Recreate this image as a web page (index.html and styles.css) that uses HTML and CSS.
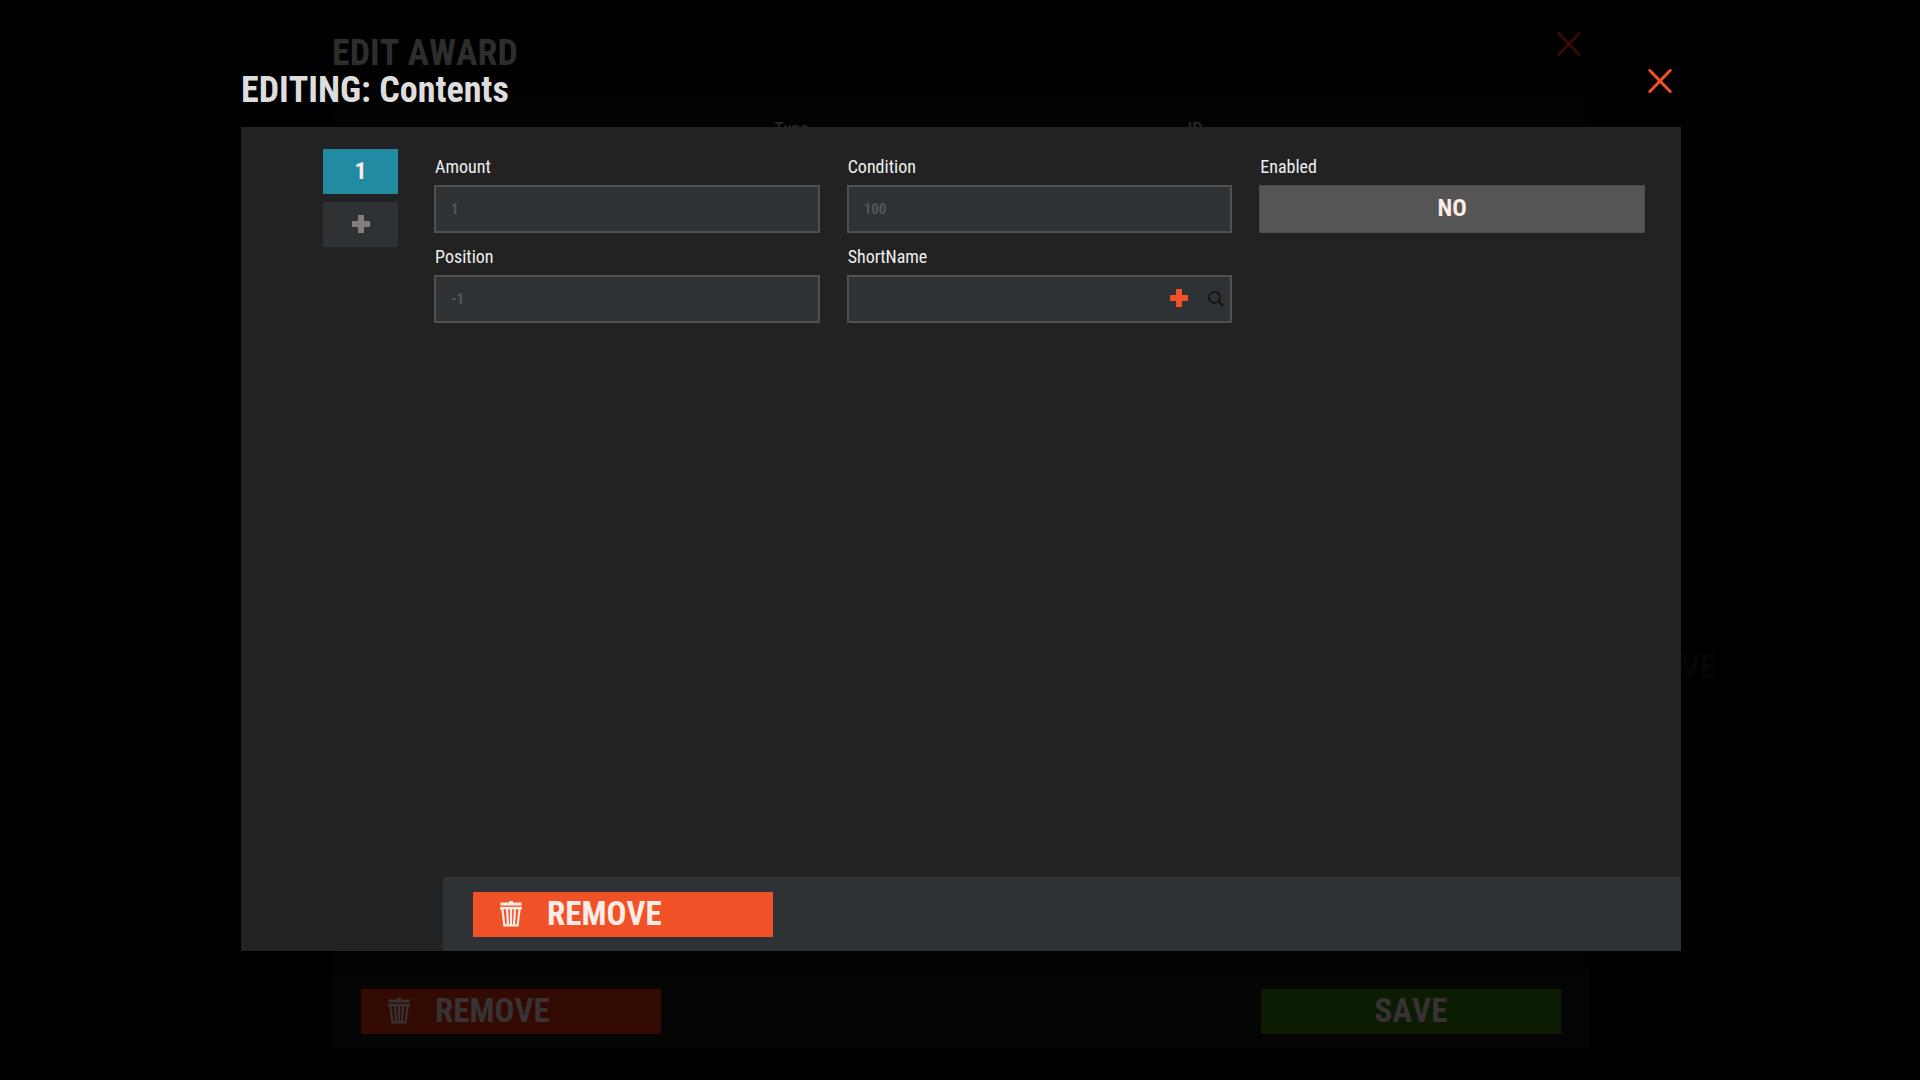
FILE: index.html
```html
<!DOCTYPE html>
<html lang="en">
<head>
    <meta charset="UTF-8">
    <meta name="viewport" content="width=device-width, initial-scale=1.0">
    <title>Edit Award - Contents</title>
    <link rel="stylesheet" href="styles.css">
</head>
<body>
    <!-- Shared icons -->
    <svg class="icon-defs" aria-hidden="true">
        <symbol id="icon-close" viewBox="0 0 24 24">
            <path d="M1.8 1.5 22.2 22.5M22.2 1.5 1.8 22.5" fill="none" stroke="currentColor" stroke-width="3" stroke-linecap="round"/>
        </symbol>
        <symbol id="icon-plus" viewBox="0 0 18 18">
            <path d="M6 0h6v6h6v6h-6v6H6v-6H0V6h6z" fill="currentColor"/>
        </symbol>
        <symbol id="icon-search" viewBox="0 0 16 16">
            <circle cx="6.4" cy="6.4" r="5.5" fill="none" stroke="currentColor" stroke-width="1.5"/>
            <path d="M10.4 10.4 15.2 15.2" fill="none" stroke="currentColor" stroke-width="1.8"/>
        </symbol>
        <symbol id="icon-trash" viewBox="0 0 24 26">
            <path d="M10 0h4v1.5h8.5v3h-21v-3H10z" fill="currentColor"/>
            <path d="M1 5.8h22v2.6H1z" fill="currentColor"/>
            <path d="M3.4 8 5.4 24.4h13.2L20.6 8M8 8l1 16M12 8v16M16 8l-1 16" fill="none" stroke="currentColor" stroke-width="2.2"/>
        </symbol>
    </svg>

    <!-- Page behind the dialogs -->
    <main class="page">
        <button type="button" class="page-save">SAVE</button>
    </main>

    <!-- Award dialog -->
    <section class="layer award" aria-label="Edit award">
        <header class="dialog-header">
            <h2>EDIT AWARD</h2>
            <button type="button" class="close" aria-label="Close"><svg><use href="#icon-close"/></svg></button>
        </header>
        <div class="award-body">
            <span></span>
            <span>Type</span>
            <span>ID</span>
        </div>
        <footer class="award-footer">
            <button type="button" class="btn remove"><svg><use href="#icon-trash"/></svg>REMOVE</button>
            <button type="button" class="btn save">SAVE</button>
        </footer>
    </section>

    <!-- Contents dialog -->
    <section class="layer contents" aria-label="Editing contents">
        <header class="dialog-header">
            <h2>EDITING: Contents</h2>
            <button type="button" class="close" aria-label="Close"><svg><use href="#icon-close"/></svg></button>
        </header>
        <div class="contents-body">
            <nav class="tabs">
                <button type="button" class="tab active">1</button>
                <button type="button" class="tab" aria-label="Add item"><svg><use href="#icon-plus"/></svg></button>
            </nav>
            <form class="fields">
                <div class="field">
                    <label for="amount">Amount</label>
                    <input type="text" id="amount" name="amount" placeholder="1">
                </div>
                <div class="field">
                    <label for="condition">Condition</label>
                    <input type="text" id="condition" name="condition" placeholder="100">
                </div>
                <div class="field">
                    <label for="enabled">Enabled</label>
                    <button type="button" id="enabled" class="toggle">NO</button>
                </div>
                <div class="field">
                    <label for="position">Position</label>
                    <input type="text" id="position" name="position" placeholder="-1">
                </div>
                <div class="field">
                    <label for="shortname">ShortName</label>
                    <div class="picker">
                        <input type="text" id="shortname" name="shortname">
                        <button type="button" class="picker-add" aria-label="Add"><svg><use href="#icon-plus"/></svg></button>
                        <button type="button" class="picker-search" aria-label="Search"><svg><use href="#icon-search"/></svg></button>
                    </div>
                </div>
            </form>
            <footer class="contents-footer">
                <button type="button" class="btn remove"><svg><use href="#icon-trash"/></svg>REMOVE</button>
            </footer>
        </div>
    </section>
</body>
</html>
```
FILE: styles.css
```css
* {
    box-sizing: border-box;
}
body {
    margin: 0;
    min-height: 100vh;
    background-color: black;
    color: #eeeeee;
    font-family: "Roboto Condensed", Roboto, sans-serif;
    font-size: 18px;
    font-kerning: none;
    overflow: hidden;
}
button, input {
    padding: 0;
    border: none;
    border-radius: 0;
    background: none;
    color: inherit;
    font: inherit;
    font-kerning: inherit;
}
button {
    cursor: pointer;
}
svg {
    display: block;
}
.icon-defs {
    position: absolute;
    width: 0;
    height: 0;
}

/* Page under the dialogs */
.page {
    display: flex;
    justify-content: flex-end;
    align-items: center;
    height: 100vh;
    padding: 252px 204px 0 0;
}
.page-save {
    color: #060606;
    font-size: 33px;
    font-weight: bold;
}

/* Dialog layers */
.layer {
    position: absolute;
    inset: 0 0 0 2px;
    display: flex;
    flex-direction: column;
    margin: 0 auto;
}
.dialog-header {
    display: flex;
    justify-content: space-between;
    align-items: flex-start;
    height: 58px;
}
.dialog-header h2 {
    margin: 0;
    color: #dddddd;
    font-size: 36px;
    line-height: 42px;
}
.close {
    margin-right: 9px;
    color: #f05127;
}
.close svg {
    width: 24px;
    height: 24px;
}
.btn {
    display: flex;
    align-items: center;
    width: 300px;
    height: 45px;
    padding-bottom: 2px;
    color: #fdebe6;
    font-size: 33px;
    font-weight: bold;
}
.btn svg {
    width: 24px;
    height: 26px;
    margin: 0 24px 0 26px;
}
.remove {
    background-color: #f05127;
}

/* Award dialog */
.award {
    width: 1258px;
    max-width: 66%;
    padding: 32px 0;
}
.award .dialog-header h2 {
    color: #2d2d2d;
}
.award .close {
    color: #380b02;
}
.award-body {
    flex: 1;
    display: grid;
    grid-template-columns: repeat(3, 1fr);
    gap: 27px;
    align-items: start;
    padding: 28px 16px 28px 29px;
    background-color: #020202;
    color: #2d2d2d;
}
.award-footer {
    display: flex;
    justify-content: space-between;
    padding: 14px 29px;
    background-color: #040404;
}
.award .btn {
    color: #383232;
}
.award .remove {
    background-color: #330a02;
}
.award .save {
    justify-content: center;
    background-color: #0b1c02;
}

/* Contents dialog */
.contents {
    width: 75%;
    padding: 69px 0 129px;
}
.contents-body {
    flex: 1;
    display: grid;
    grid-template-columns: 157px 1fr;
    grid-template-rows: 1fr 74px;
    background-color: #222222;
}
.tabs {
    display: flex;
    flex-direction: column;
    align-items: flex-end;
    gap: 8px;
    padding-top: 22px;
}
.tab {
    display: flex;
    justify-content: center;
    align-items: center;
    width: 75px;
    height: 45px;
    padding-bottom: 2px;
    background-color: #2e3235;
    color: #857c79;
    font-size: 24px;
    font-weight: bold;
}
.tab.active {
    background-color: #228ba2;
    color: #fdebe6;
}
.tab svg {
    width: 18px;
    height: 18px;
}
.fields {
    display: grid;
    grid-template-columns: repeat(3, 1fr);
    align-content: start;
    gap: 12px 27px;
    padding: 28px 36px 0;
}
.field {
    display: flex;
    flex-direction: column;
}
.field label {
    height: 30px;
    padding-left: 1px;
    line-height: 24px;
}
.field input, .toggle {
    width: 100%;
    height: 48px;
}
.field input {
    padding: 0 15px;
    border: 2px solid #505050;
    background-color: #2e3235;
    font-size: 15px;
    font-weight: bold;
}
.field input::placeholder {
    color: #555555;
}
.toggle {
    padding-bottom: 2px;
    border: 1px solid #4c4c4c;
    background-color: #555555;
    color: #fdebe6;
    font-size: 24px;
    font-weight: bold;
}
.picker {
    position: relative;
}
.picker button {
    position: absolute;
    top: 14px;
}
.picker .picker-add {
    right: 44px;
    color: #f05127;
}
.picker .picker-search {
    top: 16px;
    right: 8px;
    color: #0c0d0e;
}
.picker-add svg {
    width: 18px;
    height: 18px;
}
.picker-search svg {
    width: 16px;
    height: 16px;
}
.contents-footer {
    grid-column: 1 / -1;
    margin-left: 202px;
    padding: 15px 30px;
    background-color: #2e3235;
}
```
